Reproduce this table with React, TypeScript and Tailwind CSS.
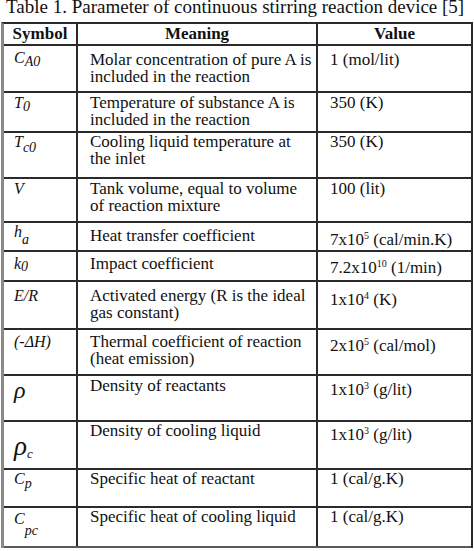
import type { ReactNode } from "react";

type Row = {
  h: string;
  pt: string;
  sympt: string;
  sym: ReactNode;
  meaning: string[];
  value: ReactNode;
};

const Sub = ({ children, cls }: { children: ReactNode; cls: string }) => (
  <span className={`text-[14px] ${cls}`}>{children}</span>
);

const Sup = ({ children }: { children: ReactNode }) => (
  <span className="text-[10px] align-[6px]">{children}</span>
);

const rows: Row[] = [
  {
    h: "h-[47px]",
    pt: "pt-[5px]",
    sympt: "pt-[3px]",
    sym: (
      <>
        C<Sub cls="align-[-3px]">A0</Sub>
      </>
    ),
    meaning: ["Molar concentration of pure A is", "included in the reaction"],
    value: "1 (mol/lit)",
  },
  {
    h: "h-[40px]",
    pt: "pt-[1px]",
    sympt: "pt-[1px]",
    sym: (
      <>
        T<Sub cls="align-[-3px]">0</Sub>
      </>
    ),
    meaning: ["Temperature of substance A is", "included in the reaction"],
    value: "350 (K)",
  },
  {
    h: "h-[46px]",
    pt: "pt-0",
    sympt: "pt-0",
    sym: (
      <>
        T<Sub cls="align-[-5px]">c0</Sub>
      </>
    ),
    meaning: ["Cooling liquid temperature at", "the inlet"],
    value: "350 (K)",
  },
  {
    h: "h-[44px]",
    pt: "pt-[1px]",
    sympt: "pt-[1px]",
    sym: <>V</>,
    meaning: ["Tank volume, equal to volume", "of reaction mixture"],
    value: "100 (lit)",
  },
  {
    h: "h-[29px]",
    pt: "pt-[4px]",
    sympt: "pt-0",
    sym: (
      <>
        h<Sub cls="align-[-7px]">a</Sub>
      </>
    ),
    meaning: ["Heat transfer coefficient"],
    value: (
      <>
        7x10<Sup>5</Sup> (cal/min.K)
      </>
    ),
  },
  {
    h: "h-[30px]",
    pt: "pt-[3px]",
    sympt: "pt-[3px]",
    sym: (
      <>
        k<Sub cls="align-[-2px]">0</Sub>
      </>
    ),
    meaning: ["Impact coefficient"],
    value: (
      <>
        7.2x10<Sup>10</Sup> (1/min)
      </>
    ),
  },
  {
    h: "h-[48px]",
    pt: "pt-[5px]",
    sympt: "pt-[5px]",
    sym: <>E/R</>,
    meaning: ["Activated energy (R is the ideal", "gas constant)"],
    value: (
      <>
        1x10<Sup>4</Sup> (K)
      </>
    ),
  },
  {
    h: "h-[46px]",
    pt: "pt-[3px]",
    sympt: "pt-[3px]",
    sym: <>(-ΔH)</>,
    meaning: ["Thermal coefficient of reaction", "(heat emission)"],
    value: (
      <>
        2x10<Sup>5</Sup> (cal/mol)
      </>
    ),
  },
  {
    h: "h-[46px]",
    pt: "pt-[1px]",
    sympt: "pt-[6px]",
    sym: <span className="text-[24px] leading-[17px]">ρ</span>,
    meaning: ["Density of reactants"],
    value: (
      <>
        1x10<Sup>3</Sup> (g/lit)
      </>
    ),
  },
  {
    h: "h-[48px]",
    pt: "pt-0",
    sympt: "pt-[16px] pl-[3px]",
    sym: (
      <>
        <span className="text-[27px] leading-[17px]">ρ</span>
        <span className="text-[13px] align-[-3px]">c</span>
      </>
    ),
    meaning: ["Density of cooling liquid"],
    value: (
      <>
        1x10<Sup>3</Sup> (g/lit)
      </>
    ),
  },
  {
    h: "h-[38px]",
    pt: "pt-0",
    sympt: "pt-0",
    sym: (
      <>
        C<Sub cls="align-[-4px]">p</Sub>
      </>
    ),
    meaning: ["Specific heat of reactant"],
    value: "1 (cal/g.K)",
  },
  {
    h: "h-[40px]",
    pt: "pt-0",
    sympt: "pt-[2px]",
    sym: (
      <>
        C<Sub cls="align-[-11px]">pc</Sub>
      </>
    ),
    meaning: ["Specific heat of cooling liquid"],
    value: "1 (cal/g.K)",
  },
];

export default function App() {
  return (
    <div className="w-[474px] h-[551px] bg-white text-[#111] font-['Liberation_Serif','Times_New_Roman',serif] overflow-hidden">
      <div className="h-[22px] pl-[6px] text-[19px] leading-[14px] whitespace-nowrap">
        Table 1. Parameter of continuous stirring reaction device [5]
      </div>
      <div className="ml-[1px] w-[472px] border-t-2 border-r-2 border-l-[3px] border-t-[#2a2a2a] border-r-[#2a2a2a] border-l-[#8a8a8a]">
        <div className="grid grid-cols-[74px_240px_153px] h-[22px] border-b-2 border-[#2a2a2a] text-[17px] leading-[20px] font-bold">
          <div className="border-r-2 border-[#2a2a2a] text-center">Symbol</div>
          <div className="border-r-2 border-[#2a2a2a] text-center">Meaning</div>
          <div className="text-center">Value</div>
        </div>
        {rows.map((r, i) => (
          <div
            key={i}
            className={`grid grid-cols-[74px_240px_153px] ${r.h} border-b-2 ${
              i === rows.length - 1 ? "border-[#5a5a5a]" : "border-[#2a2a2a]"
            }`}
          >
            <div className={`border-r-2 border-[#2a2a2a] pl-[10px] text-[16px] leading-[17px] italic whitespace-nowrap ${r.sympt}`}>
              {r.sym}
            </div>
            <div className={`border-r-2 border-[#2a2a2a] pl-[12px] text-[17px] leading-[17px] ${r.pt}`}>
              {r.meaning.map((m) => (
                <div key={m} className="whitespace-nowrap">
                  {m}
                </div>
              ))}
            </div>
            <div className={`pl-[12px] text-[17px] leading-[17px] whitespace-nowrap ${r.pt}`}>{r.value}</div>
          </div>
        ))}
      </div>
    </div>
  );
}
